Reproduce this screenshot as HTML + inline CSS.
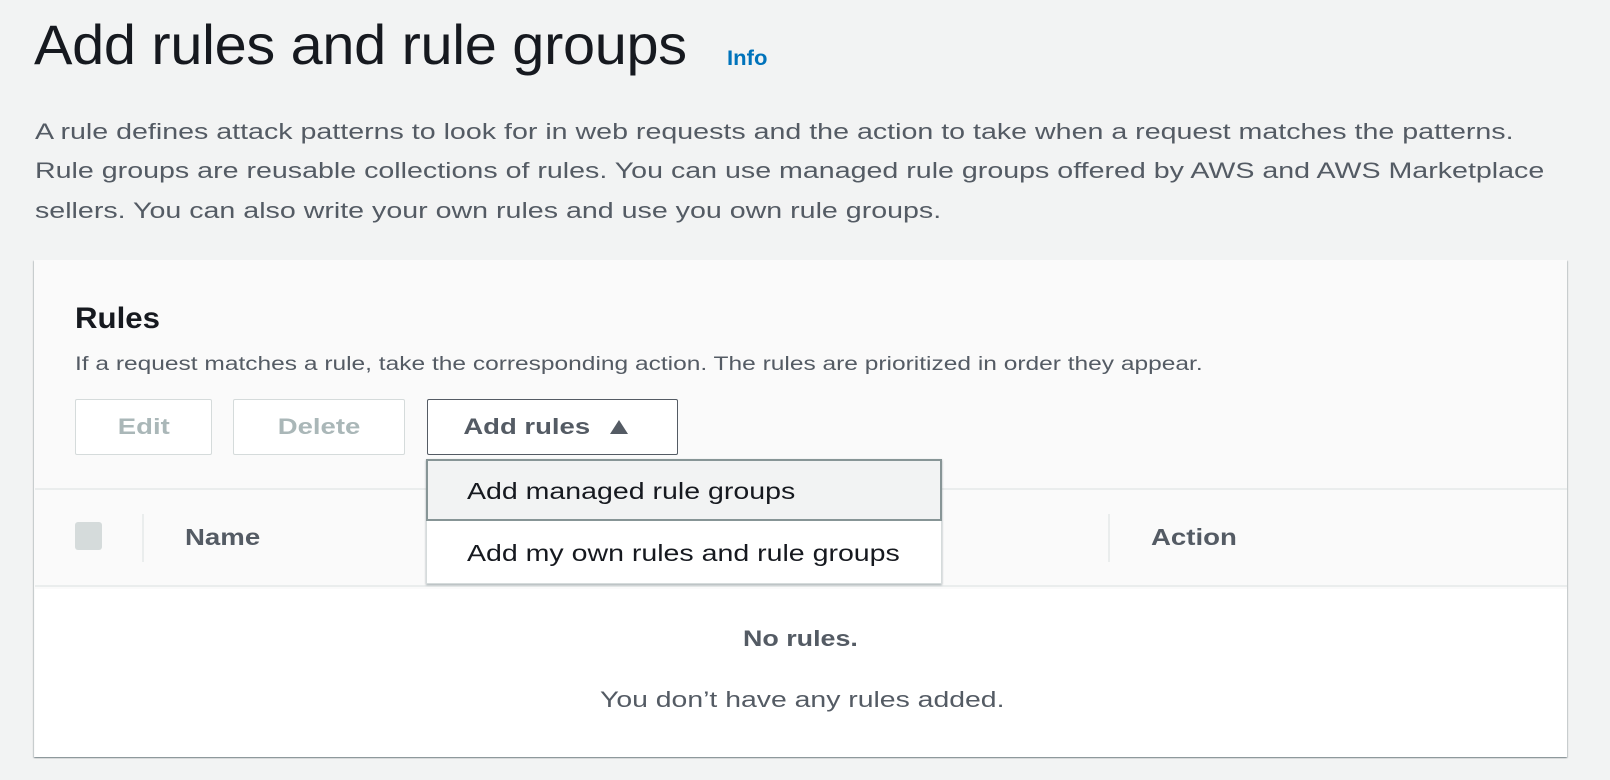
<!DOCTYPE html>
<html><head><meta charset="utf-8"><style>
body{margin:0;width:1610px;height:780px;background:#f2f3f3;font-family:"Liberation Sans",Arial,sans-serif;overflow:hidden;position:relative}
.a{position:absolute;white-space:nowrap;transform-origin:0 50%}
h1{position:absolute;left:34px;top:12px;margin:0;font-weight:400;font-size:56px;color:#16191f;letter-spacing:-0.3px;white-space:nowrap;transform:scaleX(1.03);transform-origin:0 0}
.info{left:727px;top:47px;font-size:21px;font-weight:700;color:#0073bb;transform:scaleX(1.05)}
.p{left:35px;font-size:22px;color:#545b64;transform:scaleX(1.3)}
.card{position:absolute;left:34px;top:260px;width:1533px;height:497px;background:#fafafa;box-shadow:0 1px 1px 0 rgba(0,28,36,.3),1px 1px 1px 0 rgba(0,28,36,.15),-1px 1px 1px 0 rgba(0,28,36,.15)}
.btn{position:absolute;top:399px;height:56px;border:1px solid #d5dbdb;border-radius:2px;background:#fff;font-weight:700;font-size:22px;color:#aab7b8;display:flex;align-items:center;justify-content:center;box-sizing:border-box}
.btn span{display:inline-block;transform:scaleX(1.25)}
</style></head><body>
<h1>Add rules and rule groups</h1>
<div class="a info">Info</div>
<div class="a p" style="top:119px">A rule defines attack patterns to look for in web requests and the action to take when a request matches the patterns.</div>
<div class="a p" style="top:158px">Rule groups are reusable collections of rules. You can use managed rule groups offered by AWS and AWS Marketplace</div>
<div class="a p" style="top:198px">sellers. You can also write your own rules and use you own rule groups.</div>
<div class="card"></div>
<div class="a" style="left:75px;top:302px;font-size:30px;font-weight:700;color:#16191f;transform:scaleX(1.04)">Rules</div>
<div class="a" style="left:75px;top:354px;font-size:19px;color:#545b64;transform:scaleX(1.29)">If a request matches a rule, take the corresponding action. The rules are prioritized in order they appear.</div>
<div class="btn" style="left:75px;width:137px"><span>Edit</span></div>
<div class="btn" style="left:233px;width:172px"><span>Delete</span></div>
<div class="btn" style="left:427px;width:251px;border-color:#545b64;color:#545b64"><span>Add rules</span>&nbsp;&nbsp;&nbsp;&nbsp;&nbsp;<svg width="20" height="16" viewBox="0 0 20 16"><path d="M10 1L19 15H1Z" fill="#545b64"/></svg></div>
<div class="a" style="left:35px;top:488px;width:1532px;height:99px;background:#fafafa;border-top:2px solid #eaeded;border-bottom:2px solid #eaeded;box-sizing:border-box"></div>
<div class="a" style="left:35px;top:589px;width:1532px;height:168px;background:#fff"></div>
<div class="a" style="left:75px;top:522px;width:27px;height:28px;background:#d5dbdb;border-radius:3px"></div>
<div class="a" style="left:142px;top:514px;width:2px;height:48px;background:#eaeded"></div>
<div class="a" style="left:185px;top:524px;font-size:23px;font-weight:700;color:#545b64;transform:scaleX(1.2)">Name</div>
<div class="a" style="left:1108px;top:514px;width:2px;height:48px;background:#eaeded"></div>
<div class="a" style="left:1151px;top:524px;font-size:23px;font-weight:700;color:#545b64;transform:scaleX(1.2)">Action</div>
<div class="a" style="left:743px;top:626px;font-size:22px;font-weight:700;color:#545b64;transform:scaleX(1.22)">No rules.</div>
<div class="a" style="left:600px;top:687px;font-size:22px;color:#545b64;transform:scaleX(1.29)">You don’t have any rules added.</div>
<div class="a" style="left:426px;top:459px;width:516px;height:125px;background:#fff;box-shadow:0 1px 2px rgba(0,28,36,.35);border:1px solid #d5dbdb;box-sizing:border-box"></div>
<div class="a" style="left:426px;top:459px;width:516px;height:62px;background:#f2f3f3;border:2px solid #879596;box-sizing:border-box"></div>
<div class="a" style="left:467px;top:478px;font-size:23px;color:#16191f;transform:scaleX(1.24)">Add managed rule groups</div>
<div class="a" style="left:467px;top:540px;font-size:23px;color:#16191f;transform:scaleX(1.24)">Add my own rules and rule groups</div>
</body></html>
